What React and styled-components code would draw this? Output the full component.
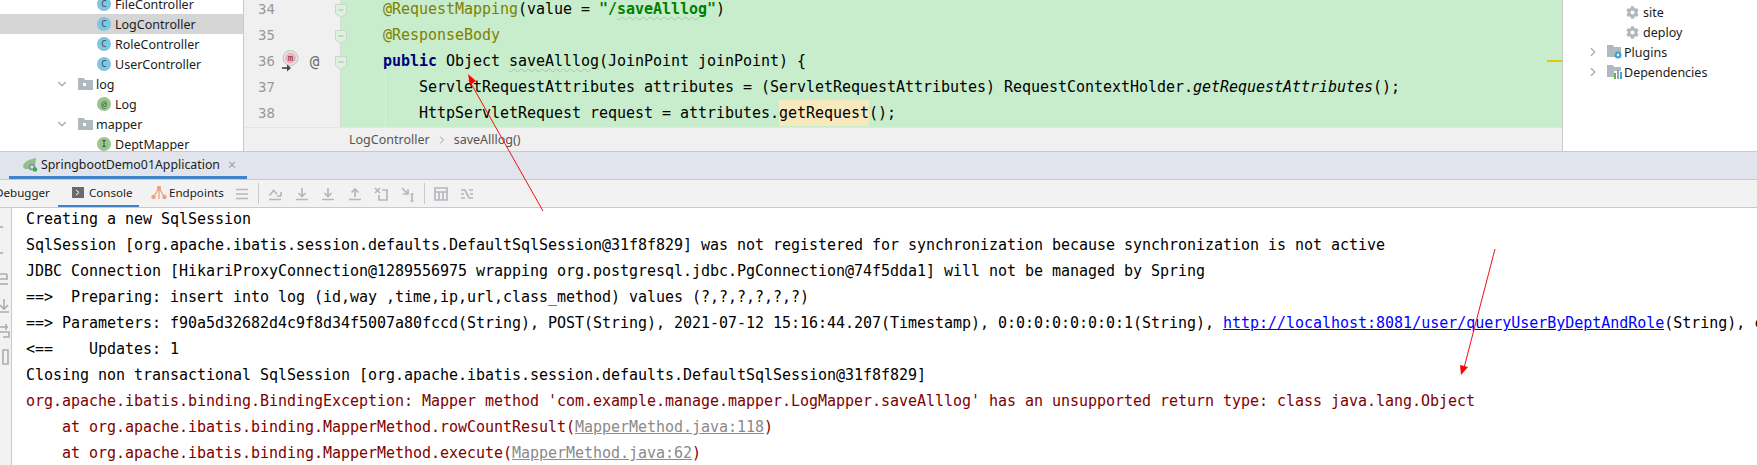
import React from "react";
import styled, { createGlobalStyle } from "styled-components";
import { FaCog } from "react-icons/fa";
import { FiChevronDown, FiChevronRight } from "react-icons/fi";

const Global = createGlobalStyle`
  html, body { margin: 0; padding: 0; background: #fff; }
  #root { width: 1757px; height: 465px; overflow: hidden; }
`;

const Page = styled.div`
  position: relative;
  width: 1757px;
  height: 465px;
  overflow: hidden;
  display: flex;
  flex-direction: column;
  font-family: "Noto Sans", sans-serif;
`;

const Top = styled.div`
  height: 151px;
  display: grid;
  grid-template-columns: 243px 1fr 194px;
  border-bottom: 1px solid #c9c9c9;
  flex: none;
`;

const Tree = styled.div`
  overflow: hidden;
  background: #fff;
`;

const TreeList = styled.div`
  margin-top: ${(p) => p.$shift || 0}px;
`;

const TreeRow = styled.div`
  height: 20px;
  display: flex;
  align-items: center;
  padding-left: ${(p) => p.$indent}px;
  background: ${(p) => (p.$selected ? "#d5d5d5" : "transparent")};
  font-size: 12.5px;
  color: #1c1c1c;
  white-space: nowrap;
`;

const Badge = styled.span`
  width: 14px;
  height: 14px;
  border-radius: 50%;
  background: ${(p) => p.$bg};
  color: #3f4a4f;
  font-family: "DejaVu Sans Mono", monospace;
  font-size: 9px;
  display: flex;
  align-items: center;
  justify-content: center;
  margin-right: 4px;
  flex: none;
`;

const Arrow = styled.span`
  width: 20px;
  margin-right: ${(p) => p.$gap ?? 6}px;
  color: #a8a8a8;
  font-size: 14px;
  display: flex;
  justify-content: center;
`;

const Folder = styled.svg`
  width: 15px;
  height: 12px;
  margin-right: 3px;
  flex: none;
`;

const Gear = styled(FaCog)`
  color: #b0b8bf;
  font-size: 13px;
  margin-right: 4px;
`;

const NodeIcon = styled.svg`
  width: 16px;
  height: 14px;
  margin-right: 1px;
  flex: none;
`;

const Editor = styled.div`
  display: flex;
  flex-direction: column;
  border-left: 1px solid #c9c9c9;
  border-right: 1px solid #c9c9c9;
  min-width: 0;
`;

const EditorBody = styled.div`
  height: 127px;
  display: flex;
  overflow: hidden;
  position: relative;
`;

const Gutter = styled.div`
  width: 96px;
  flex: none;
  background: #f0f0f0;
`;

const GutterRows = styled.div`
  margin-top: -4px;
`;

const GutterRow = styled.div`
  height: 26px;
  display: flex;
  align-items: center;
  position: relative;
  font-family: "DejaVu Sans Mono", monospace;
  font-size: 14px;
  color: #999;
  padding-left: 14px;
`;

const GutterIcons = styled.span`
  display: flex;
  align-items: center;
  margin-left: 7px;
  gap: 11px;
`;

const AtSign = styled.span`
  font-size: 16px;
  color: #6e6e6e;
`;

const Fold = styled.svg`
  position: absolute;
  left: 91px;
  top: 8px;
  width: 12px;
  height: 14px;
  z-index: 1;
`;

const Code = styled.div`
  flex: 1;
  background: #c7edcc;
  padding-left: 42px;
  border-left: 1px solid #d2dcd2;
  font-family: "DejaVu Sans Mono", monospace;
  font-size: 15px;
  letter-spacing: -0.03px;
  color: #000;
  white-space: pre;
  overflow: hidden;
  position: relative;
`;

const CodeRows = styled.div`
  margin-top: -4px;
`;

const CodeRow = styled.div`
  height: 26px;
  line-height: 26px;
`;

const Guide = styled.div`
  position: absolute;
  top: 73px;
  bottom: 0;
  left: 44px;
  width: 1px;
  background: #dcefdd;
`;

const Margin = styled.div`
  position: absolute;
  top: 0;
  bottom: 0;
  right: 134px;
  width: 1px;
  background: #d4e6d6;
`;

const Mark = styled.div`
  position: absolute;
  right: 0;
  top: 60px;
  width: 15px;
  height: 2px;
  background: #e5c800;
`;

const Anno = styled.span`
  color: #808000;
`;
const Key = styled.span`
  color: #000080;
  font-weight: bold;
`;
const Str = styled.span`
  color: #008000;
  font-weight: bold;
`;
const Italic = styled.span`
  font-style: italic;
`;
const Warm = styled.span`
  background: #f7e8bd;
  display: inline-block;
  height: 26px;
`;
const Wavy = styled.span`
  text-decoration: underline wavy #a9c4a9 1px;
  text-underline-offset: 2px;
`;

const Crumbs = styled.div`
  flex: 1;
  background: #f0f0f0;
  border-top: 1px solid #e4e4e4;
  display: flex;
  align-items: center;
  padding-left: 105px;
  font-size: 12.5px;
  color: #555;
`;

const Crumb = styled.span`
  display: flex;
  align-items: center;
`;

const CrumbSep = styled.span`
  display: flex;
  margin: 0 6px;
  color: #999;
  font-size: 12px;
`;

const Right = styled.div`
  overflow: hidden;
  background: #fff;
`;

const Tabs = styled.div`
  height: 27px;
  flex: none;
  background: #e1e4ec;
  border-bottom: 1px solid #c9c9c9;
  padding-left: 9px;
  display: flex;
`;

const RunTab = styled.div`
  width: 238px;
  box-sizing: border-box;
  display: flex;
  align-items: center;
  padding-left: 13px;
  border-bottom: 3px solid #4083c9;
  font-size: 12.35px;
  color: #1c1c1c;
  gap: 3px;
`;

const CloseX = styled.span`
  color: #a0a0a0;
  font-size: 14px;
  margin-left: 5px;
`;

const Toolbar = styled.div`
  height: 27px;
  flex: none;
  background: #f2f2f2;
  border-bottom: 1px solid #c9c9c9;
  display: flex;
  align-items: stretch;
  font-size: 11.6px;
  color: #1c1c1c;
`;

const ToolTab = styled.div`
  display: flex;
  align-items: center;
  gap: ${(p) => p.$gap || 5}px;
  width: ${(p) => p.$w}px;
  box-sizing: border-box;
  padding-left: ${(p) => p.$pad || 0}px;
  border-bottom: 2px solid ${(p) => (p.$active ? "#4083c9" : "transparent")};
  white-space: nowrap;
  overflow: ${(p) => (p.$clip ? "hidden" : "visible")};
`;

const ClipText = styled.span`
  margin-left: -5px;
`;

const ToolIcons = styled.div`
  display: flex;
  align-items: center;
  gap: 8px;
  margin-left: 6px;
`;

const ToolGroup = styled.div`
  display: flex;
  align-items: center;
  gap: ${(p) => p.$gap}px;
`;

const ToolSep = styled.span`
  width: 1px;
  height: 21px;
  background: #c9c9c9;
`;

const ToolIcon = styled.svg`
  width: 16px;
  height: 16px;
  flex: none;
`;

const Console = styled.div`
  flex: 1;
  display: flex;
  min-height: 0;
`;

const Rail = styled.div`
  width: 11px;
  flex: none;
  background: #f2f2f2;
  border-right: 1px solid #c9c9c9;
  overflow: hidden;
  padding-top: 6px;
`;

const RailIcon = styled.svg`
  display: block;
  width: 11px;
  height: 26px;
`;

const Output = styled.div`
  flex: 1;
  min-width: 0;
  padding-left: 14px;
  font-family: "DejaVu Sans Mono", monospace;
  font-size: 15px;
  letter-spacing: -0.03px;
  white-space: pre;
  overflow: hidden;
  color: #000;
`;

const Line = styled.div`
  height: 26px;
  line-height: 22px;
  color: ${(p) => (p.$err ? "#800000" : "#000")};
`;

const Link = styled.span`
  color: #0000ff;
  text-decoration: underline;
`;

const Trace = styled.span`
  color: #8a8a8a;
  text-decoration: underline;
`;

const Overlay = styled.svg`
  position: absolute;
  left: 0;
  top: 0;
  width: 1757px;
  height: 465px;
  pointer-events: none;
`;

const FolderIcon = () => (
  <Folder viewBox="0 0 15 12">
    <path d="M0 0h6l1 2h8v10H0z" fill="#aeb9c0" />
    <rect x="5" y="5" width="3" height="3" fill="#fff" />
  </Folder>
);

const ClassRow = ({ name, selected, letter = "C", bg = "#7fc5e4" }) => (
  <TreeRow $indent={97} $selected={selected}>
    <Badge $bg={bg}>{letter}</Badge>
    {name}
  </TreeRow>
);

const FoldMark = () => (
  <Fold viewBox="0 0 12 14">
    <path d="M.5.5h11v9l-5.5 4-5.5-4z" fill="#dff0df" stroke="#c9d6c9" />
    <path d="M3.5 6h5" stroke="#a9b7a9" />
  </Fold>
);

const toolPaths = [
  "M2 13.5h12M2.5 9.5L6.5 4.5L10 8M14 6v4h-4",
  "M8 2v8M4.5 7L8 10.5 11.5 7M2 13.5h12",
  "M8 2v8M4.5 7L8 10.5 11.5 7M2 13.5h12",
  "M8 11V3M4.5 6.5L8 3l3.5 3.5M2 13.5h12",
  "M2 2l5 5M7 2l-5 5M9 4h5v10H6V9",
  "M2 2l6 6M8 3v5H3M12 8v7M10.5 8h3M10.5 15h3",
];

const Tool = ({ d }) => (
  <ToolIcon viewBox="0 0 16 16">
    <path d={d} fill="none" stroke="#b4b8bc" strokeWidth="1.7" />
  </ToolIcon>
);

const railPaths = [
  "M0 13h3",
  "M0 13h3",
  "M0 8h7M7 8v5H0M0 18h8",
  "M4 7v10M0 13l4 4 4-4M0 20h9",
  "M0 9h8M6 6v6M0 14h9v5H3",
  "M3 6h5v14H3z",
];

export default function App() {
  return (
    <Page>
      <Global />
      <Top>
        <Tree>
          <TreeList $shift={-6}>
            <ClassRow name="FileController" />
            <ClassRow name="LogController" selected />
            <ClassRow name="RoleController" />
            <ClassRow name="UserController" />
            <TreeRow $indent={52}>
              <Arrow><FiChevronDown /></Arrow>
              <FolderIcon />
              log
            </TreeRow>
            <ClassRow name="Log" letter="@" bg="#9cc58c" />
            <TreeRow $indent={52}>
              <Arrow><FiChevronDown /></Arrow>
              <FolderIcon />
              mapper
            </TreeRow>
            <ClassRow name="DeptMapper" letter="I" bg="#9cc58c" />
          </TreeList>
        </Tree>
        <Editor>
          <EditorBody>
            <Gutter>
              <GutterRows>
                <GutterRow>34<FoldMark /></GutterRow>
                <GutterRow>35<FoldMark /></GutterRow>
                <GutterRow>
                  36
                  <GutterIcons>
                    <svg width="17" height="22" viewBox="0 0 17 22">
                      <circle cx="8.5" cy="8" r="7.5" fill="#e8e8e8" stroke="#b5c0c5" />
                      <circle cx="8.5" cy="8" r="5.5" fill="#f3b0ba" />
                      <text x="8.5" y="11" fontSize="9" textAnchor="middle" fill="#7a2a33" fontFamily="DejaVu Sans Mono">m</text>
                      <path d="M0 18h6" stroke="#444" strokeWidth="1.6" />
                      <path d="M5 14.5l4 3.5-4 3.5z" fill="#444" />
                    </svg>
                    <AtSign>@</AtSign>
                  </GutterIcons>
                  <FoldMark />
                </GutterRow>
                <GutterRow>37</GutterRow>
                <GutterRow>38</GutterRow>
              </GutterRows>
            </Gutter>
            <Code>
              <Guide />
              <Margin />
              <Mark />
              <CodeRows>
                <CodeRow><Anno>@RequestMapping</Anno>(value = <Str>"/<Wavy>saveAlllog</Wavy>"</Str>)</CodeRow>
                <CodeRow><Anno>@ResponseBody</Anno></CodeRow>
                <CodeRow><Key>public</Key> Object <Wavy>saveAlllog</Wavy>(JoinPoint joinPoint) {"{"}</CodeRow>
                <CodeRow>    ServletRequestAttributes attributes = (ServletRequestAttributes) RequestContextHolder.<Italic>getRequestAttributes</Italic>();</CodeRow>
                <CodeRow>    HttpServletRequest request = attributes.<Warm>getRequest</Warm>();</CodeRow>
              </CodeRows>
            </Code>
          </EditorBody>
          <Crumbs>
            <Crumb>LogController</Crumb>
            <CrumbSep><FiChevronRight /></CrumbSep>
            <Crumb>saveAlllog()</Crumb>
          </Crumbs>
        </Editor>
        <Right>
          <TreeList $shift={2}>
            <TreeRow $indent={63}><Gear />site</TreeRow>
            <TreeRow $indent={63}><Gear />deploy</TreeRow>
            <TreeRow $indent={20}>
              <Arrow $gap={4}><FiChevronRight /></Arrow>
              <NodeIcon viewBox="0 0 16 14">
                <path d="M0 0h6l1 2h7v10H0z" fill="#aeb9c0" />
                <circle cx="11" cy="10" r="3.5" fill="#40a4dc" />
                <circle cx="11" cy="10" r="1.2" fill="#fff" />
              </NodeIcon>
              Plugins
            </TreeRow>
            <TreeRow $indent={20}>
              <Arrow $gap={4}><FiChevronRight /></Arrow>
              <NodeIcon viewBox="0 0 16 14">
                <path d="M0 0h6l1 2h7v10H0z" fill="#aeb9c0" />
                <rect x="7" y="6" width="9" height="8" fill="#fff" />
                <rect x="7" y="8" width="2" height="6" fill="#62b543" />
                <rect x="10" y="5" width="2" height="9" fill="#9aa4aa" />
                <rect x="13" y="7" width="2" height="7" fill="#40a4dc" />
              </NodeIcon>
              Dependencies
            </TreeRow>
          </TreeList>
        </Right>
      </Top>
      <Tabs>
        <RunTab>
          <svg width="16" height="15" viewBox="0 0 16 15">
            <path d="M1 10C1 5 7 2 14 1c0 6-2 11-8 11-2 0-4 0-5-2z" fill="#8fc28b" />
            <circle cx="10" cy="10" r="3.5" fill="#8d979d" />
            <circle cx="10" cy="10" r="1.5" fill="#e1e4ec" />
            <circle cx="13" cy="12.5" r="2.2" fill="#2fb344" />
          </svg>
          SpringbootDemo01Application
          <CloseX>×</CloseX>
        </RunTab>
      </Tabs>
      <Toolbar>
        <ToolTab $w={58} $clip>
          <ClipText>Debugger</ClipText>
        </ToolTab>
        <ToolTab $w={81} $pad={14} $active>
          <svg width="12" height="11" viewBox="0 0 12 11">
            <rect width="12" height="11" fill="#6b6b6b" />
            <path d="M4 3l3 2.5L4 8" stroke="#fff" fill="none" />
          </svg>
          Console
        </ToolTab>
        <ToolTab $w={89} $pad={12} $gap={2}>
          <svg width="16" height="16" viewBox="0 0 16 16">
            <circle cx="2.5" cy="12" r="2.2" fill="#f0a27a" />
            <circle cx="8" cy="3" r="2.2" fill="#f0a27a" />
            <circle cx="13.5" cy="12" r="2.2" fill="#f0a27a" />
            <path d="M2.5 12L8 3l5.5 9M8 3v11" stroke="#f0a27a" fill="none" strokeWidth="1.3" />
          </svg>
          Endpoints
        </ToolTab>
        <ToolIcons>
          <Tool d="M2 3.5h12M2 8h12M2 12.5h12" />
          <ToolSep />
          <ToolGroup $gap={10.6}>
            {toolPaths.map((d, i) => <Tool key={i} d={d} />)}
          </ToolGroup>
          <ToolSep />
          <ToolGroup $gap={10}>
            <Tool d="M2 2h12v12H2zM2 6h12M6 6v8M10 6v8" />
            <Tool d="M2 4h4l4 8h4M2 12h4M10 4h4M2 8h3M11 8h3" />
          </ToolGroup>
        </ToolIcons>
      </Toolbar>
      <Console>
        <Rail>
          {railPaths.map((d, i) => (
            <RailIcon key={i} viewBox="0 0 11 26">
              <path d={d} fill="none" stroke="#a9adb1" strokeWidth="1.6" />
            </RailIcon>
          ))}
        </Rail>
        <Output>
          <Line>Creating a new SqlSession</Line>
          <Line>SqlSession [org.apache.ibatis.session.defaults.DefaultSqlSession@31f8f829] was not registered for synchronization because synchronization is not active</Line>
          <Line>JDBC Connection [HikariProxyConnection@1289556975 wrapping org.postgresql.jdbc.PgConnection@74f5dda1] will not be managed by Spring</Line>
          <Line>==&gt;  Preparing: insert into log (id,way ,time,ip,url,class_method) values (?,?,?,?,?,?)</Line>
          <Line>==&gt; Parameters: f90a5d32682d4c9f8d34f5007a80fccd(String), POST(String), 2021-07-12 15:16:44.207(Timestamp), 0:0:0:0:0:0:0:1(String), <Link>http://localhost:8081/user/queryUserByDeptAndRole</Link>(String), class</Line>
          <Line>&lt;==    Updates: 1</Line>
          <Line>Closing non transactional SqlSession [org.apache.ibatis.session.defaults.DefaultSqlSession@31f8f829]</Line>
          <Line $err>org.apache.ibatis.binding.BindingException: Mapper method 'com.example.manage.mapper.LogMapper.saveAlllog' has an unsupported return type: class java.lang.Object</Line>
          <Line $err>    at org.apache.ibatis.binding.MapperMethod.rowCountResult(<Trace>MapperMethod.java:118</Trace>)</Line>
          <Line $err>    at org.apache.ibatis.binding.MapperMethod.execute(<Trace>MapperMethod.java:62</Trace>)</Line>
        </Output>
      </Console>
      <Overlay viewBox="0 0 1757 465">
        <path d="M543 211L469 80" stroke="#f01010" strokeWidth="1" fill="none" />
        <path d="M468 74l8 7-6 4z" fill="#f00" />
        <path d="M1495 249L1464 368" stroke="#f01010" strokeWidth="1" fill="none" />
        <path d="M1461 375l-1-10 8 2z" fill="#f00" />
      </Overlay>
    </Page>
  );
}
